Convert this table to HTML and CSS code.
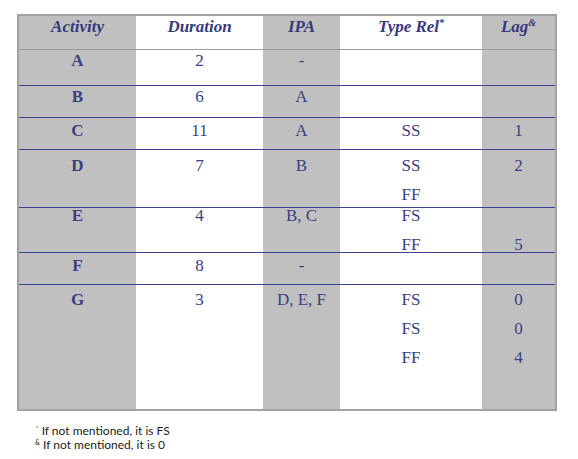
FILE: index.html
```html
<!DOCTYPE html>
<html>
<head>
<meta charset="utf-8">
<link rel="stylesheet" href="styles.css">
</head>
<body>
<div class="page">
  <div class="table">
    <div class="row head">
      <div class="c g"><span class="ln">Activity</span></div>
      <div class="c w"><span class="ln">Duration</span></div>
      <div class="c g"><span class="ln">IPA</span></div>
      <div class="c w"><span class="ln">Type Rel<sup class="hs">*</sup></span></div>
      <div class="c g"><span class="ln">Lag<sup class="hs">&amp;</sup></span></div>
    </div>
    <div class="row first r-a">
      <div class="c g act"><span class="ln">A</span></div>
      <div class="c w"><span class="ln">2</span></div>
      <div class="c g"><span class="ln">-</span></div>
      <div class="c w"></div>
      <div class="c g"></div>
    </div>
    <div class="row r-b">
      <div class="c g act"><span class="ln">B</span></div>
      <div class="c w"><span class="ln">6</span></div>
      <div class="c g"><span class="ln">A</span></div>
      <div class="c w"></div>
      <div class="c g"></div>
    </div>
    <div class="row r-c">
      <div class="c g act"><span class="ln">C</span></div>
      <div class="c w"><span class="ln">11</span></div>
      <div class="c g"><span class="ln">A</span></div>
      <div class="c w"><span class="ln">SS</span></div>
      <div class="c g"><span class="ln">1</span></div>
    </div>
    <div class="row r-d">
      <div class="c g act"><span class="ln">D</span></div>
      <div class="c w"><span class="ln">7</span></div>
      <div class="c g"><span class="ln">B</span></div>
      <div class="c w"><span class="ln">SS</span><span class="ln">FF</span></div>
      <div class="c g"><span class="ln">2</span></div>
    </div>
    <div class="row r-e">
      <div class="c g act"><span class="ln">E</span></div>
      <div class="c w"><span class="ln">4</span></div>
      <div class="c g"><span class="ln">B, C</span></div>
      <div class="c w"><span class="ln">FS</span><span class="ln">FF</span></div>
      <div class="c g"><span class="ln">&nbsp;</span><span class="ln">5</span></div>
    </div>
    <div class="row r-f">
      <div class="c g act"><span class="ln">F</span></div>
      <div class="c w"><span class="ln">8</span></div>
      <div class="c g"><span class="ln">-</span></div>
      <div class="c w"></div>
      <div class="c g"></div>
    </div>
    <div class="row r-g">
      <div class="c g act"><span class="ln">G</span></div>
      <div class="c w"><span class="ln">3</span></div>
      <div class="c g"><span class="ln">D, E, F</span></div>
      <div class="c w"><span class="ln">FS</span><span class="ln">FS</span><span class="ln">FF</span></div>
      <div class="c g"><span class="ln">0</span><span class="ln">0</span><span class="ln">4</span></div>
    </div>
  </div>
  <div class="notes">
    <div class="note n1"><sup class="fs">*</sup> If not mentioned, it is FS</div>
    <div class="note n2"><sup class="fs amp">&amp;</sup> If not mentioned, it is 0</div>
  </div>
</div>
</body>
</html>
```
FILE: styles.css
```css
html, body {
  margin: 0;
  padding: 0;
  background: #ffffff;
}

.page {
  padding: 14px 0 0 17px;
}

.table {
  width: 540px;
  box-sizing: border-box;
  border: 2px solid #a2a2a2;
  font-family: "Liberation Serif", "Times New Roman", serif;
  font-size: 17px;
  color: #3b4082;
}

.row {
  display: grid;
  grid-template-columns: 117px 127px 77px 142px 73px;
  grid-template-rows: minmax(0, 1fr);
  box-sizing: border-box;
  border-top: 1px solid #3d4290;
  --pt: 0px;
}

.row.head {
  border-top: none;
  height: 33px;
  font-weight: bold;
  font-style: italic;
  color: #353a7c;
}

.row.first {
  border-top: 1px solid #9c9c9c;
}

.r-a { height: 36px; --pt: 0px; }
.r-b { height: 32px; --pt: 0px; }
.r-c { height: 32px; --pt: 2px; }
.r-d { height: 58px; --pt: 5px; }
.r-e { height: 45px; --pt: -3px; }
.r-f { height: 32px; --pt: 2px; }
.r-g { height: 125px; --pt: 4px; }

.c {
  display: flex;
  flex-direction: column;
  align-items: center;
  gap: 7px;
  min-height: 0;
  overflow: visible;
}

.c .ln:first-child {
  margin-top: var(--pt);
}

.g { background: #c0c0c0; }
.w { background: #ffffff; }

.ln {
  display: block;
  line-height: 22px;
  white-space: nowrap;
  flex-shrink: 0;
}

.act { font-weight: bold; }

.hs {
  font-size: 10px;
  vertical-align: top;
  line-height: 12px;
  position: relative;
  top: 1px;
}

.notes {
  margin-top: 13px;
  font-family: Lato, "Open Sans", sans-serif;
  font-size: 12px;
  line-height: 14px;
  color: #222222;
}

.note { white-space: nowrap; }
.n1 { padding-left: 19px; }
.n2 { padding-left: 18px; }

.fs {
  font-size: 6px;
  vertical-align: top;
  line-height: 8px;
}

.fs.amp { font-size: 7px; }
```
